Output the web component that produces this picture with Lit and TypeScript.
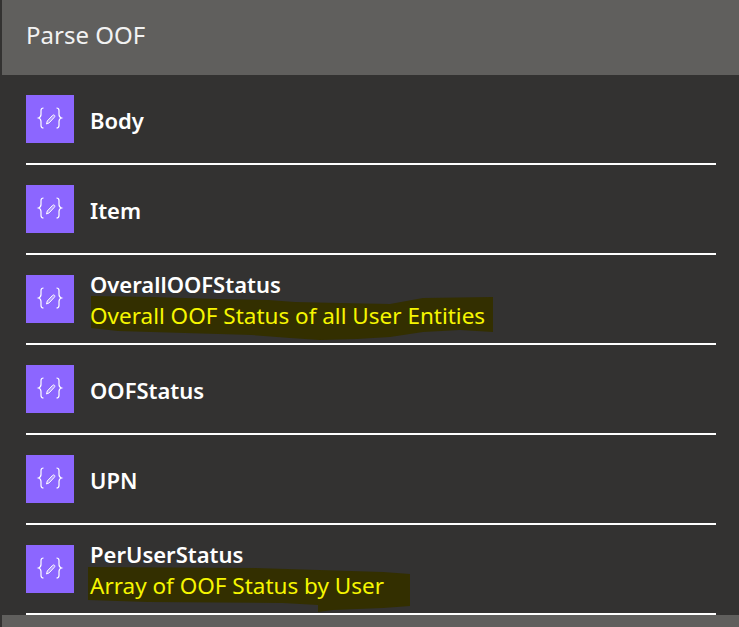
import { LitElement, html, css, svg } from 'lit';
import { customElement } from 'lit/decorators.js';

// mark = marker stroke behind the description, in row coordinates
const rows = [
  { name: 'Body' },
  { name: 'Item' },
  {
    name: 'OverallOOFStatus',
    desc: 'Overall OOF Status of all User Entities',
    mark: 'M65 41 L126 42 L192 44 L242 45 L269 47 L314 48 L364 49 L397 43 L467 42 L467 77 L434 75 L397 77 L364 82 L331 84 L294 85 L264 83 L226 80 L159 78 L92 76 L65 73 Z',
  },
  { name: 'OOFStatus' },
  { name: 'UPN' },
  {
    name: 'PerUserStatus',
    desc: 'Array of OOF Status by User',
    mark: 'M62 42 L229 43 L357 47 L384 49 L384 81 L357 83 L307 85 L292 87 L292 80 L257 78 L122 77 L62 75 Z',
  },
];

@customElement('app-root')
export class AppRoot extends LitElement {
  static styles = css`
    :host {
      display: block;
      width: 739px;
      height: 627px;
      overflow: hidden;
      background: #333231;
      font-family: "Noto Sans", "Open Sans", sans-serif;
    }

    .header {
      height: 75px;
      margin-left: 2px;
      padding-left: 24px;
      background: #605f5d;
      color: #f2f2f2;
      font-size: 24px;
      line-height: 69px;
    }

    .row {
      position: relative;
      box-sizing: border-box;
      height: 90px;
      margin: 0 23px 0 26px;
      padding-top: 20px;
      border-bottom: 2px solid #fff;
      display: flex;
      gap: 16px;
    }

    .icon {
      width: 48px;
      height: 48px;
      flex: none;
      background: #8c66ff;
    }

    .icon svg {
      display: block;
    }

    .text {
      position: relative;
      box-sizing: border-box;
      height: 48px;
      padding-top: 2px;
      display: flex;
      flex-direction: column;
      justify-content: center;
    }

    .name {
      color: #fff;
      font-size: 22px;
      font-weight: 600;
      line-height: 30px;
    }

    .sub {
      margin-top: 1px;
      color: #f6f600;
      font-size: 22.5px;
      line-height: 32px;
      white-space: nowrap;
    }

    .mark {
      position: absolute;
      left: 0;
      top: 0;
      overflow: visible;
    }

    .footer {
      height: 12px;
      margin-left: 2px;
      background: #605f5d;
    }
  `;

  renderIcon() {
    return html`<div class="icon">
      <svg width="48" height="48" viewBox="0 0 48 48" fill="none" stroke="#fff" stroke-width="1.2">
        <path d="M17.500 13c-2 0-2.500 1-2.500 2.500v4c0 2-1 3-2.500 3.500c1.500.5 2.500 1.500 2.500 3.500v4c0 1.500.5 2.500 2.500 2.500" />
        <path d="M30.500 13c2 0 2.500 1 2.500 2.500v4c0 2 1 3 2.500 3.500c-1.500.5-2.500 1.500-2.500 3.500v4c0 1.500-.5 2.500-2.500 2.500" />
        <path d="M20.500 29l.8-3l5.200-5.600c.7-.7 1.500-.6 2-.1c.5.5.5 1.300-.2 2l-5.200 5.600z" fill="#ffffff" fill-opacity="0.3" stroke-width="1" />
      </svg>
    </div>`;
  }

  render() {
    return html`
      <div class="header">Parse OOF</div>
      ${rows.map(
        (r) => html`<div class="row">
          ${r.mark
            ? html`<svg class="mark" width="690" height="90" fill="#332f00">
                ${svg`<path d=${r.mark} />`}
              </svg>`
            : ''}
          ${this.renderIcon()}
          <div class="text">
            <div class="name">${r.name}</div>
            ${r.desc ? html`<div class="sub">${r.desc}</div>` : ''}
          </div>
        </div>`
      )}
      <div class="footer"></div>
    `;
  }
}
